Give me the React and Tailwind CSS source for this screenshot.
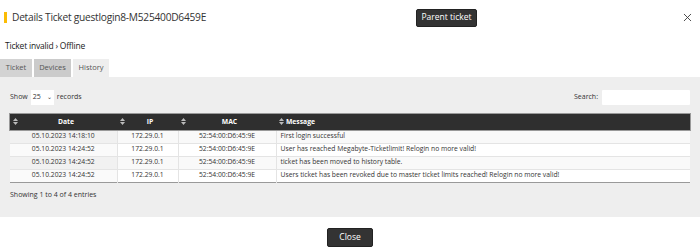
import { X } from "lucide-react";

const rows = [
  ["05.10.2023 14:18:10", "172.29.0.1", "52:54:00:D6:45:9E", "First login successful"],
  ["05.10.2023 14:24:52", "172.29.0.1", "52:54:00:D6:45:9E", "User has reached Megabyte-Ticketlimit! Relogin no more valid!"],
  ["05.10.2023 14:24:52", "172.29.0.1", "52:54:00:D6:45:9E", "ticket has been moved to history table."],
  ["05.10.2023 14:24:52", "172.29.0.1", "52:54:00:D6:45:9E", "Users ticket has been revoked due to master ticket limits reached! Relogin no more valid!"],
];

function SortIcon() {
  return (
    <svg width="5" height="7" viewBox="0 0 5 7" className="shrink-0">
      <path d="M2.5 0 L5 3 H0 Z" fill="#bbb" />
      <path d="M2.5 7 L5 4 H0 Z" fill="#bbb" />
    </svg>
  );
}

function HeadCell({ label, width, align = "center" }) {
  return (
    <th className={`${width} h-[16px] px-[3px] font-bold text-white`}>
      <div className="flex items-center">
        <SortIcon />
        {align === "center" ? (
          <span className="flex-1 text-center">{label}</span>
        ) : (
          <span className="ml-[2px]">{label}</span>
        )}
      </div>
    </th>
  );
}

export default function App() {
  return (
    <div className="h-[252px] w-[700px] overflow-hidden bg-white font-['Open_Sans',sans-serif] text-[#333]">
      <div className="flex h-[35px] items-center pl-[4px] pr-[6px]">
        <div className="h-[11px] w-[3px] bg-[#fbbc05]" />
        <h1 className="ml-[5px] w-[404px] text-[10.2px] tracking-[-0.25px] text-[#333]">Details Ticket guestlogin8-M525400D6459E</h1>
        <button className="h-[18px] w-[61px] rounded-[2px] border border-[#222] bg-[#333] text-[8.5px] text-white">
          Parent ticket
        </button>
        <div className="flex-1" />
        <X size={13} strokeWidth={1.6} className="text-[#333]" />
      </div>

      <div className="h-[24px] pl-[5px] pt-[5px] text-[8.5px] font-medium tracking-[-0.2px] text-[#222]">
        Ticket invalid › Offline
      </div>

      <div className="flex gap-[2px] text-[7.5px] text-[#555]">
        <div className="flex h-[18px] w-[32px] items-center justify-center bg-[#d3d3d3]">Ticket</div>
        <div className="flex h-[18px] w-[37px] items-center justify-center bg-[#cbcbcb]">Devices</div>
        <div className="flex h-[18px] w-[36px] items-center justify-center bg-[#eeeeee]">History</div>
      </div>

      <div className="h-[140px] bg-[#eeeeee] px-[10px] pt-[13px]">
        <div className="flex items-center justify-between text-[7px] text-[#333]">
          <div className="flex items-center">
            <span>Show</span>
            <div className="ml-[3px] flex h-[15px] w-[23px] items-center justify-between bg-white px-[2px]">
              <span>25</span>
              <span className="text-[6px]">⌄</span>
            </div>
            <span className="ml-[3px]">records</span>
          </div>
          <div className="flex items-center">
            <span>Search:</span>
            <div className="ml-[4px] h-[15px] w-[88px] rounded-[1px] bg-white" />
          </div>
        </div>

        <table className="mt-[9px] w-full border-collapse border-b border-[#999] text-[6.75px]">
          <thead>
            <tr className="bg-[#2f2f2f] outline outline-1 outline-[#999]">
              <HeadCell label="Date" width="w-[107px]" />
              <HeadCell label="IP" width="w-[61px]" />
              <HeadCell label="MAC" width="w-[98px]" />
              <HeadCell label="Message" align="left" />
            </tr>
          </thead>
          <tbody>
            {rows.map((r, i) => (
              <tr key={i} className={`h-[13px] border-t border-[#e4e4e4] ${i % 2 === 0 ? "bg-[#f9f9f9]" : "bg-white"}`}>
                <td className={`text-center ${i % 2 === 0 ? "bg-[#f1f1f1]" : "bg-[#fafafa]"}`}>{r[0]}</td>
                <td className="border-l border-[#e4e4e4] text-center">{r[1]}</td>
                <td className="border-l border-[#e4e4e4] text-center">{r[2]}</td>
                <td className="border-l border-[#e4e4e4] px-[4px]">{r[3]}</td>
              </tr>
            ))}
          </tbody>
        </table>

        <div className="mt-[7px] text-[7px] text-[#333]">Showing 1 to 4 of 4 entries</div>
      </div>

      <div className="flex justify-center pt-[11px]">
        <button className="h-[19px] w-[46px] rounded-[2px] border border-[#222] bg-[#333] text-[8.5px] text-white">
          Close
        </button>
      </div>
    </div>
  );
}
